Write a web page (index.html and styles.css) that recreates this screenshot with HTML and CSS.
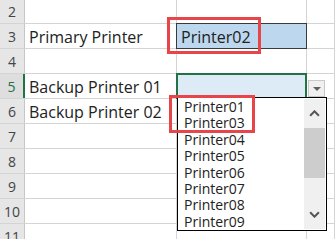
FILE: index.html
```html
<!DOCTYPE html>
<html lang="en">
<head>
    <meta charset="UTF-8">
    <title>Backup Printer</title>
    <link rel="stylesheet" href="styles.css">
</head>
<body>
    <div class="sheet">
        <div class="row first">
            <div class="head">2</div><div class="cell"></div><div class="cell"></div><div class="cell"></div>
        </div>
        <div class="row">
            <div class="head">3</div><div class="cell">Primary Printer</div><div class="cell value">Printer02</div><div class="cell"></div>
        </div>
        <div class="row">
            <div class="head">4</div><div class="cell"></div><div class="cell"></div><div class="cell"></div>
        </div>
        <div class="row">
            <div class="head active">5</div><div class="cell">Backup Printer 01</div><div class="cell input"></div><div class="cell"></div>
        </div>
        <div class="row">
            <div class="head">6</div><div class="cell">Backup Printer 02</div><div class="cell"></div><div class="cell"></div>
        </div>
        <div class="row">
            <div class="head">7</div><div class="cell"></div><div class="cell"></div><div class="cell"></div>
        </div>
        <div class="row">
            <div class="head">8</div><div class="cell"></div><div class="cell"></div><div class="cell"></div>
        </div>
        <div class="row">
            <div class="head">9</div><div class="cell"></div><div class="cell"></div><div class="cell"></div>
        </div>
        <div class="row">
            <div class="head">10</div><div class="cell"></div><div class="cell"></div><div class="cell"></div>
        </div>
        <div class="row">
            <div class="head">11</div><div class="cell"></div><div class="cell"></div><div class="cell"></div>
        </div>

        <!-- in-cell dropdown -->
        <div class="drop-button"><span class="tri"></span></div>
        <div class="list">
            <div class="items">
                <div>Printer01</div>
                <div>Printer03</div>
                <div>Printer04</div>
                <div>Printer05</div>
                <div>Printer06</div>
                <div>Printer07</div>
                <div>Printer08</div>
                <div>Printer09</div>
            </div>
            <div class="scrollbar">
                <svg class="chev" viewBox="0 0 10 6"><path d="M1 5 L5 1 L9 5"></path></svg>
                <div class="thumb"></div>
                <svg class="chev" viewBox="0 0 10 6"><path d="M1 1 L5 5 L9 1"></path></svg>
            </div>
        </div>

        <!-- callouts -->
        <div class="mark mark-primary"></div>
        <div class="mark mark-list"></div>
    </div>
</body>
</html>
```

FILE: styles.css
```css
* {
    margin: 0;
    padding: 0;
    box-sizing: border-box;
}

body {
    background: #fff;
    font-family: "Open Sans", "Noto Sans", sans-serif;
    color: #222;
    overflow: hidden;
}

.sheet {
    position: relative;
    width: 335px;
    height: 240px;
}

.row {
    display: grid;
    grid-template-columns: 25px 152px 130px 1fr;
    height: 25px;
    border-bottom: 1px solid #d4d4d4;
}

.row.first {
    margin-top: -1px;
}

.head {
    background: #e6e6e6;
    border-right: 1px solid #c6c6c6;
    color: #444;
    font-size: 14px;
    display: flex;
    align-items: center;
    justify-content: center;
}

.head.active {
    color: #217346;
    border-right: 2px solid #217346;
    background: #dedede;
}

.cell {
    border-right: 1px solid #d4d4d4;
    font-size: 16px;
    line-height: 22px;
    display: flex;
    align-items: flex-end;
    padding: 0 0 0 4px;
    white-space: nowrap;
}

.cell.value {
    background: #bdd7ee;
    border: 1px solid #3a3a3a;
    margin: -1px 0 -1px -1px;
    padding-left: 4px;
}

.cell.input {
    background: #ddebf7;
    border: 2px solid #217346;
    margin: -1px 0 -1px -1px;
}

.drop-button {
    position: absolute;
    left: 308px;
    top: 81px;
    width: 17px;
    height: 17px;
    background: #f0f0f0;
    border: 1px solid #c8c8c8;
    display: flex;
    align-items: center;
    justify-content: center;
}

.tri {
    width: 0;
    height: 0;
    border-left: 4px solid transparent;
    border-right: 4px solid transparent;
    border-top: 4px solid #606060;
}

.list {
    position: absolute;
    left: 177px;
    top: 98px;
    width: 150px;
    height: 134px;
    background: #fff;
    border: 1px solid #000;
    display: flex;
}

.items {
    flex: 1;
    padding: 1px 0 0 6px;
    font-size: 14px;
    line-height: 16.4px;
    color: #222;
}

.scrollbar {
    width: 21px;
    margin: 1px 1px 1px 0;
    background: #f0f0f0;
    display: flex;
    flex-direction: column;
    align-items: center;
}

.chev {
    width: 11px;
    height: 7px;
    margin: 11px 0;
    fill: none;
    stroke: #555;
    stroke-width: 1.8;
}

.thumb {
    width: 100%;
    flex: 1;
    background: #cdcdcd;
    margin-bottom: 22px;
}

.mark {
    position: absolute;
    border: 3px solid #e8454a;
}

.mark-primary {
    left: 167px;
    top: 18px;
    width: 94px;
    height: 37px;
}

.mark-list {
    left: 169px;
    top: 96px;
    width: 86px;
    height: 38px;
}
```
